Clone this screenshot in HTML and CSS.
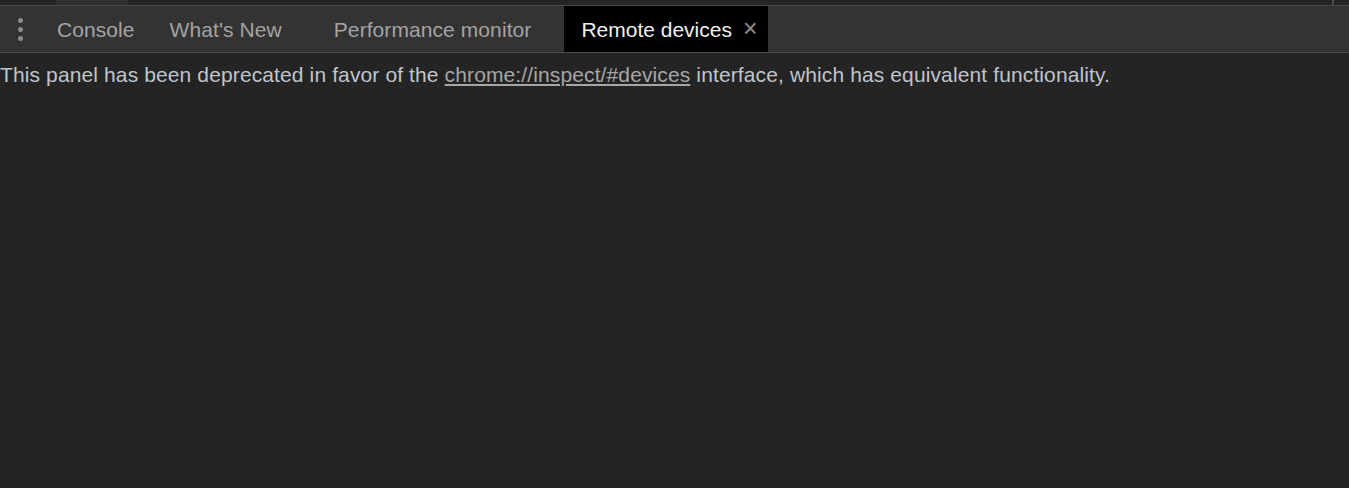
FILE: index.html
```html
<!DOCTYPE html>
<html>
<head>
<meta charset="utf-8">
<link rel="stylesheet" href="styles.css">
</head>
<body>
<div class="topstrip">
  <div class="topseg"></div>
  <div class="topfill"></div>
  <div class="topdivider"></div>
</div>
<div class="tabbar">
  <div class="menu">
    <span class="dot"></span><span class="dot"></span><span class="dot"></span>
  </div>
  <div class="tab">Console</div>
  <div class="tab tab-closable tab-wide">What's New</div>
  <div class="tab tab-closable">Performance monitor</div>
  <div class="tab active">Remote devices<span class="close">×</span></div>
</div>
<div class="content">
  <p class="message">This panel has been deprecated in favor of the <a class="link" href="#">chrome://inspect/#devices</a> interface, which has equivalent functionality.</p>
</div>
</body>
</html>
```
FILE: styles.css
```css
html, body {
  margin: 0;
  padding: 0;
  background: #242424;
  height: 100%;
  overflow: hidden;
  font-family: "Liberation Sans", Arial, sans-serif;
}
.topstrip {
  display: flex;
  height: 5px;
  background: #252525;
  border-bottom: 1px solid #4a4a4a;
}
.topseg {
  margin-left: 56px;
  width: 72px;
  background: #2f2f2f;
}
.topfill {
  flex: 1;
}
.topdivider {
  width: 2px;
  background: #4a4a4a;
  margin-right: 15px;
}
.tabbar {
  display: flex;
  align-items: stretch;
  height: 46px;
  background: #333333;
  border-bottom: 1px solid #4a4a4a;
}
.menu {
  width: 40px;
  display: flex;
  flex-direction: column;
  align-items: center;
  justify-content: center;
  gap: 4px;
  padding-top: 1px;
}
.dot {
  width: 5px;
  height: 5px;
  border-radius: 50%;
  background: #8c8c8c;
}
.tab {
  display: flex;
  align-items: center;
  padding: 2px 18px 0 17px;
  font-size: 21px;
  letter-spacing: 0.08px;
  color: #a3a3a3;
  white-space: nowrap;
}
.tab-closable {
  padding-right: 33px;
}
.tab-wide {
  padding-right: 35px;
}
.tab.active {
  background: #000;
  color: #f0f0f0;
  padding-right: 10px;
  letter-spacing: 0;
}
.close {
  margin-left: 11px;
  font-size: 25px;
  color: #8c8c8c;
  position: relative;
  top: -2px;
}
.content {
  padding: 0;
}
.message {
  margin: 0;
  padding-top: 9px;
  font-size: 21px;
  letter-spacing: 0.12px;
  line-height: 25px;
  color: #bfc5cd;
}
.link {
  color: #a6a6a6;
  text-decoration: underline;
}
```
